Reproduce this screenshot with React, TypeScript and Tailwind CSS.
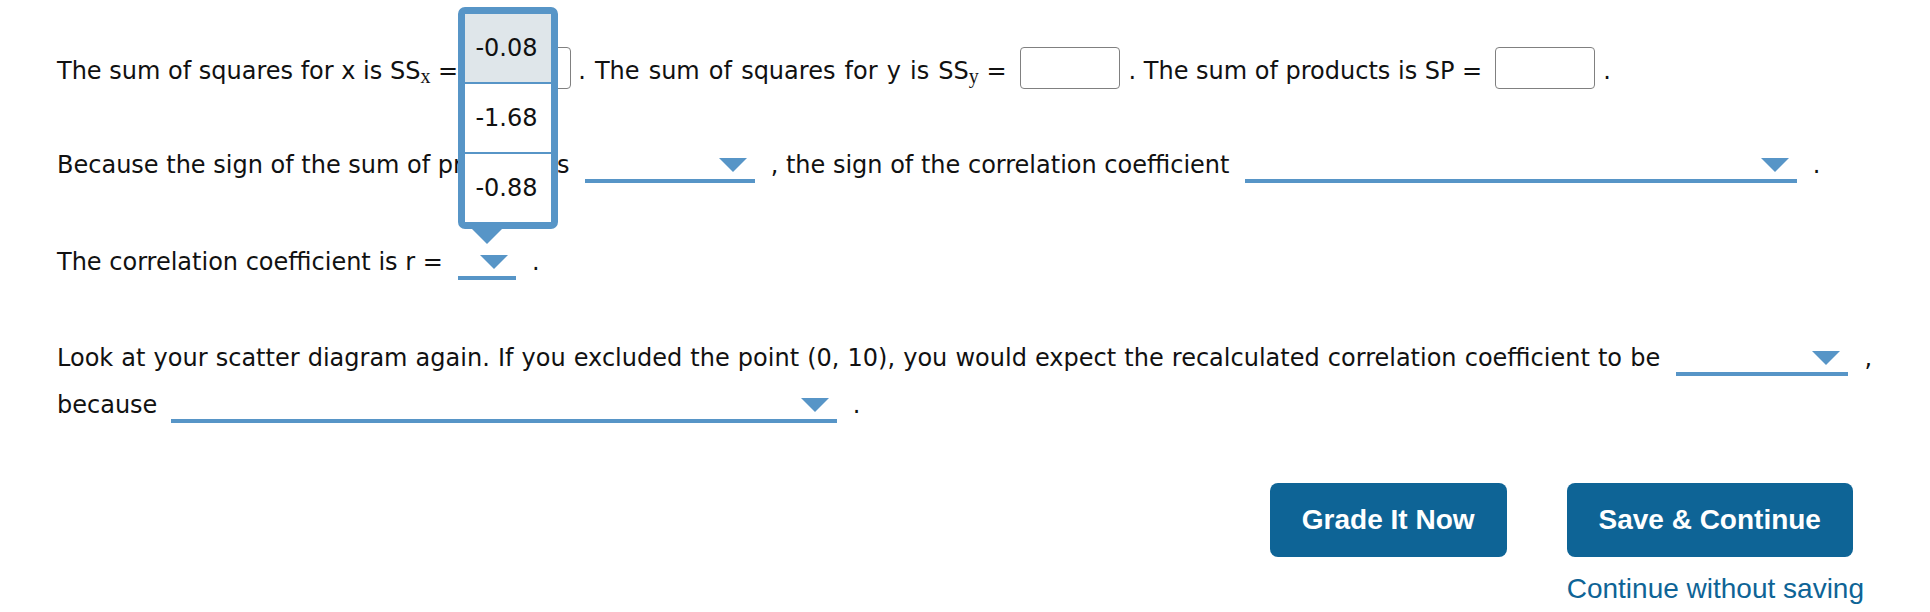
import type { ReactNode } from "react";

function Sub({ children }: { children: ReactNode }) {
    return (
        <span className="font-['Liberation_Serif','Times_New_Roman',serif] text-[20px] leading-none align-[-4px]">
            {children}
        </span>
    );
}

function AnswerBox({ className }: { className: string }) {
    return (
        <span className={`inline-block w-[100px] h-[42px] align-[-10px] rounded-[4px] border-[1.5px] border-[#808080] bg-white ${className}`} />
    );
}

function Dropdown({ width, className = "mx-2", children }: { width: string; className?: string; children?: ReactNode }) {
    return (
        <span className={`relative inline-block align-[-10px] border-b-4 border-[#5795c7] ${width} ${className}`}>
            <svg className="block ml-auto mr-2 mb-[7px]" width="28" height="14" viewBox="0 0 28 14">
                <path d="M0 0H28L14 14Z" fill="#5795c7" />
            </svg>
            {children}
        </span>
    );
}

const options = ["-0.08", "-1.68", "-0.88"];

function OptionList() {
    return (
        <span className="absolute left-0 bottom-[47px] z-10 block w-[100px] rounded-[7px] border-[7px] border-[#5795c7] bg-[#5795c7] leading-none">
            <span className="flex flex-col gap-[2px]">
                {options.map((opt, i) => (
                    <span
                        key={opt}
                        className={`flex items-center h-[68px] pl-[10px] ${i === 0 ? "bg-[#dfe6ea]" : "bg-white"}`}
                    >
                        {opt}
                    </span>
                ))}
            </span>
            {/* pointer under the list */}
            <svg className="absolute top-full left-[7px] mt-[7px]" width="30" height="15" viewBox="0 0 30 15">
                <path d="M0 0H30L15 15Z" fill="#5795c7" />
            </svg>
        </span>
    );
}

export default function App() {
    return (
        <div className="min-h-screen bg-white text-[#111] font-['DejaVu_Sans','Verdana',sans-serif] text-[24px] leading-[47px] pt-[47px] pl-[57px]">
            <p className="whitespace-nowrap">
                The sum of squares for x is SS<Sub>x</Sub> =<AnswerBox className="ml-[13px] mr-[7px]" />
                <span className="[word-spacing:1.5px]">. The sum of squares for y is SS</span>
                <Sub>y</Sub> =<AnswerBox className="ml-[13px] mr-[9px]" />. The sum of products is SP =<AnswerBox className="ml-[13px] mr-[8px]" />.
            </p>

            <p className="mt-[47px] whitespace-nowrap">
                Because the sign of the sum of products is <Dropdown width="w-[170px]" /> , the sign of the correlation coefficient <Dropdown width="w-[552px]" /> .
            </p>

            <p className="mt-[50px] whitespace-nowrap">
                The correlation coefficient is r = <Dropdown width="w-[58px]"><OptionList /></Dropdown> .
            </p>

            <p className="mt-[49px] whitespace-nowrap [word-spacing:0.5px]">
                Look at your scatter diagram again. If you excluded the point (0, 10), you would expect the recalculated correlation coefficient to be <Dropdown width="w-[172px]" /> ,
                <br />
                because <Dropdown width="w-[666px]" className="ml-[5px] mr-2" /> .
            </p>

            <div className="flex justify-end gap-[60px] pr-[66px] mt-[54px] font-['Liberation_Sans','Arial',sans-serif]">
                <button className="w-[237px] h-[74px] rounded-[8px] bg-[#0e6496] text-white text-[28px] font-bold leading-none">
                    Grade It Now
                </button>
                <div className="flex flex-col items-start">
                    <button className="w-[286px] h-[74px] rounded-[8px] bg-[#0e6496] text-white text-[28px] font-bold leading-none">
                        Save &amp; Continue
                    </button>
                    <a className="mt-[16px] text-[28px] leading-[32px] text-[#0e6496] cursor-pointer">
                        Continue without saving
                    </a>
                </div>
            </div>
        </div>
    );
}
